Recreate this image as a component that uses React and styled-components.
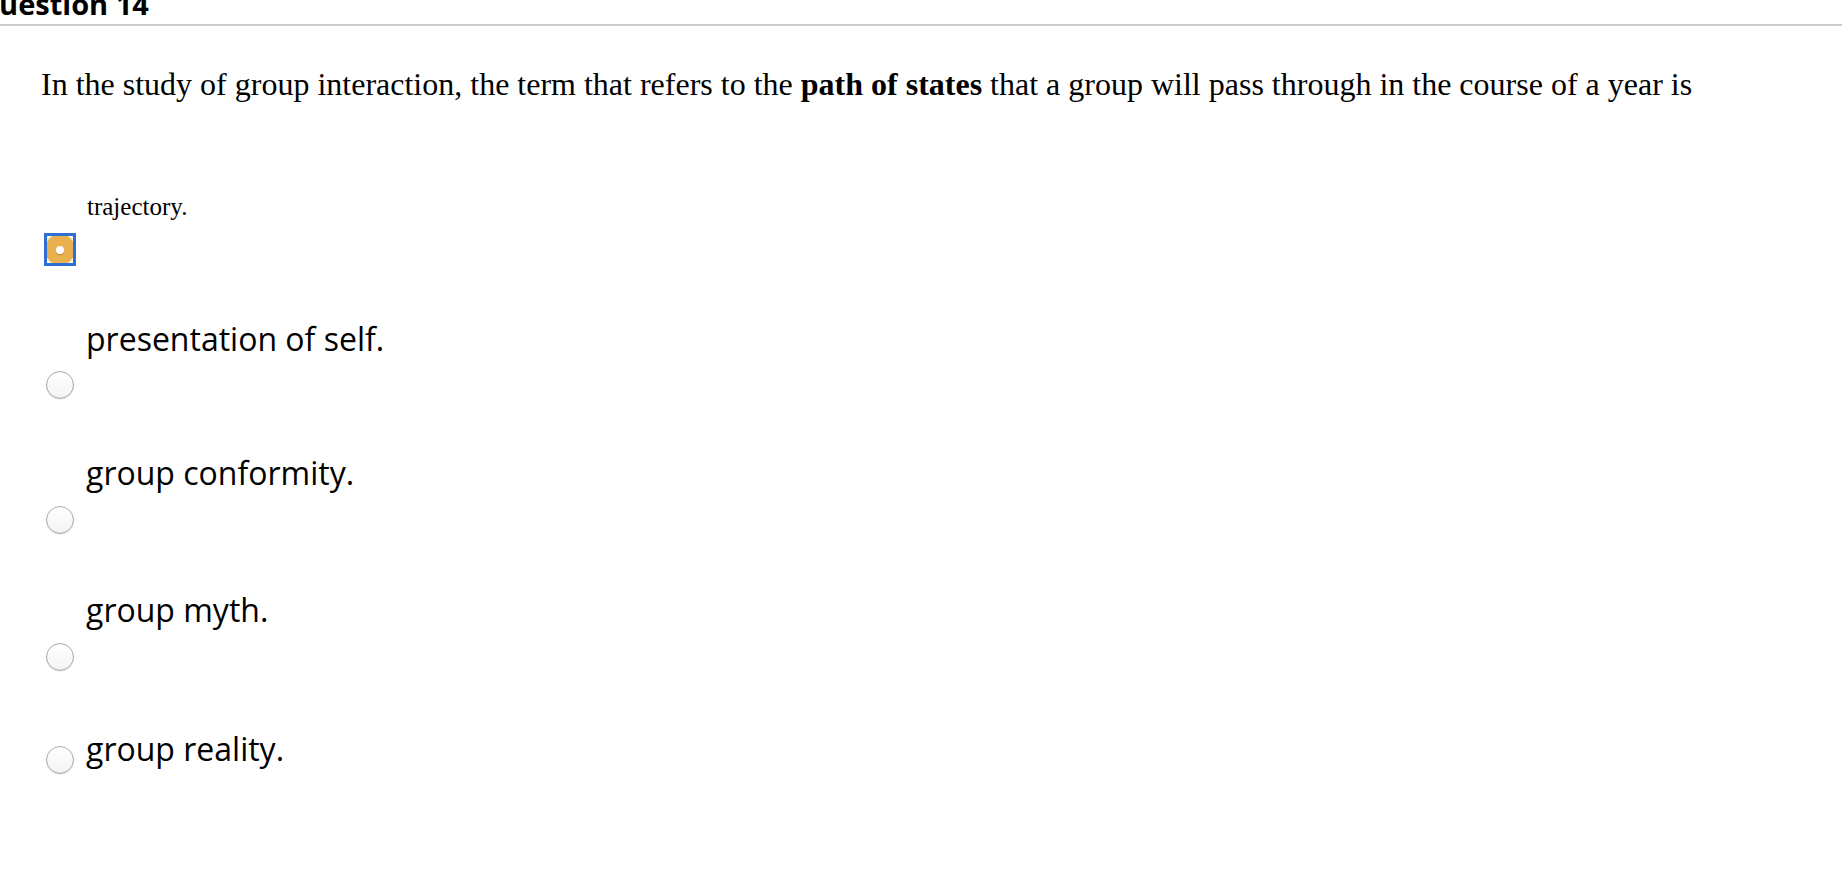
import styled, { createGlobalStyle } from "styled-components";

const GlobalStyle = createGlobalStyle`
  html, body {
    margin: 0;
    padding: 0;
    background: #fff;
    overflow: hidden;
  }
`;

const options = [
  { text: "presentation of self.", top: 53, gap: 12 },
  { text: "group conformity.", top: 54, gap: 13 },
  { text: "group myth.", top: 56, gap: 13 },
];

function App() {
  return (
    <Page>
      <GlobalStyle />
      <Header>
        <h2>Question 14</h2>
      </Header>
      <QuestionText>
        In the study of group interaction, the term that refers to the{" "}
        <b>path of states</b> that a group will pass through in the course of a
        year is
      </QuestionText>

      <Option $top={88}>
        <SerifAnswer>trajectory.</SerifAnswer>
        <SelectedRadio>
          <span />
        </SelectedRadio>
      </Option>

      {options.map((o) => (
        <Option key={o.text} $top={o.top}>
          <Answer>{o.text}</Answer>
          <Radio $offset={o.gap} />
        </Option>
      ))}

      <InlineOption>
        <Radio $offset={17} />
        <Answer $inline>group reality.</Answer>
      </InlineOption>
    </Page>
  );
}
export default App;

const Page = styled.div`
  width: 100%;
  min-height: 874px;
  color: #000;
`;

const Header = styled.div`
  padding-bottom: 16px;
  border-bottom: 2px solid #cccccc;
  overflow: hidden;
  h2 {
    margin: 0 0 0 -24px;
    font-family: "Open Sans", "Noto Sans", sans-serif;
    font-weight: 700;
    font-size: 29px;
    line-height: 8px;
    white-space: nowrap;
  }
`;

const QuestionText = styled.p`
  margin: 38px 0 0 41px;
  font-family: "Liberation Serif", "Times New Roman", serif;
  font-size: 32px;
  line-height: 40px;
  white-space: nowrap;
  b {
    font-weight: 700;
  }
`;

const Option = styled.div`
  display: flex;
  flex-direction: column;
  align-items: flex-start;
  margin-top: ${(p) => p.$top}px;
  padding-left: 44px;
`;

const SerifAnswer = styled.div`
  margin-left: 43px;
  font-family: "Liberation Serif", "Times New Roman", serif;
  font-size: 25px;
  line-height: 30px;
`;

const Answer = styled.div`
  margin-left: ${(p) => (p.$inline ? "12px" : "42px")};
  font-family: "Open Sans", "Noto Sans", sans-serif;
  font-size: 32px;
  line-height: 40px;
  white-space: nowrap;
`;

const SelectedRadio = styled.div`
  margin-top: 11px;
  width: 26px;
  height: 27px;
  border: 3px solid #2f6fd3;
  overflow: hidden;
  display: flex;
  align-items: center;
  justify-content: center;
  position: relative;
  background: #fbf3e4;
  &::before {
    content: "";
    position: absolute;
    left: -2px;
    top: -2px;
    width: 30px;
    height: 31px;
    border-radius: 50%;
    background: #e8b04f;
  }
  span {
    position: relative;
    width: 8px;
    height: 8px;
    border-radius: 50%;
    background: #fff;
    box-shadow: 0 1px 1px rgba(120, 70, 0, 0.35);
  }
`;

const Radio = styled.div`
  box-sizing: border-box;
  width: 28px;
  height: 28px;
  flex: none;
  margin-left: 2px;
  margin-top: ${(p) => p.$offset}px;
  border-radius: 50%;
  border: 1px solid #a9a9a9;
  background: linear-gradient(#ffffff, #f4f4f4);
  box-shadow: inset 0 -1px 1px rgba(0, 0, 0, 0.08), 0 1px 1px rgba(0, 0, 0, 0.06);
`;

const InlineOption = styled.div`
  display: flex;
  align-items: flex-start;
  padding-left: 44px;
  margin-top: 58px;
`;
